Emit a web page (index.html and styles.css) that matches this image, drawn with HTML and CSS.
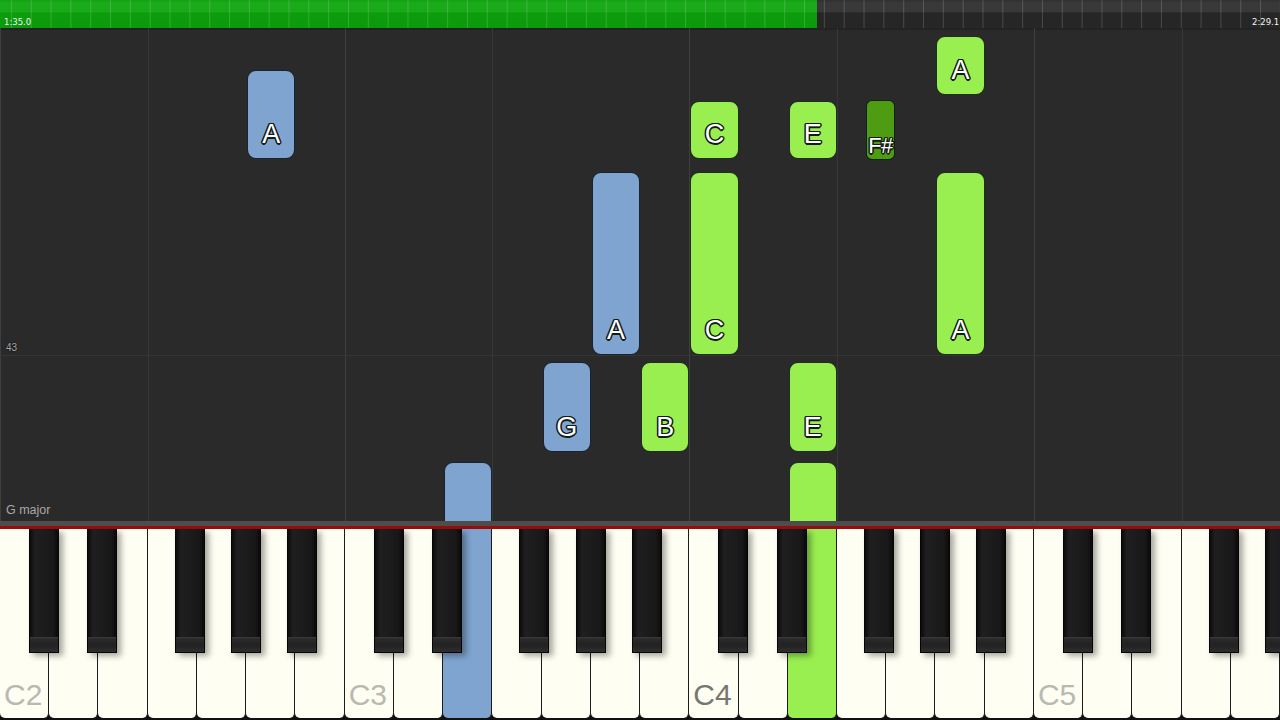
FILE: index.html
```html
<!DOCTYPE html>
<html>
<head>
<meta charset="utf-8">
<link rel="stylesheet" href="styles.css">
</head>
<body>
<div class="screen">
  <header class="timebar">
    <div class="progress"></div>
    <div class="remain"></div>
    <span class="time start">1:35.0</span>
    <span class="time end">2:29.1</span>
  </header>

  <main class="roll">
    <div class="lane c"></div>
    <div class="lane"></div>
    <div class="lane"></div>
    <div class="lane f"></div>
    <div class="lane"></div>
    <div class="lane"><div class="note blue" style="top:42px;height:89px"><span>A</span></div></div>
    <div class="lane"></div>
    <div class="lane c"></div>
    <div class="lane"></div>
    <div class="lane"><div class="note blue" style="top:434px;height:90px"></div></div>
    <div class="lane f"></div>
    <div class="lane"><div class="note blue" style="top:334px;height:90px"><span>G</span></div></div>
    <div class="lane"><div class="note blue" style="top:144px;height:183px"><span>A</span></div></div>
    <div class="lane"><div class="note green" style="top:334px;height:90px"><span>B</span></div></div>
    <div class="lane c">
      <div class="note green" style="top:73px;height:58px"><span>C</span></div>
      <div class="note green" style="top:144px;height:183px"><span>C</span></div>
    </div>
    <div class="lane"></div>
    <div class="lane">
      <div class="note green" style="top:73px;height:58px"><span>E</span></div>
      <div class="note green" style="top:334px;height:90px"><span>E</span></div>
      <div class="note green" style="top:434px;height:90px"></div>
    </div>
    <div class="lane f"><div class="note sharp" style="top:72px;height:60px"><span>F#</span></div></div>
    <div class="lane"></div>
    <div class="lane">
      <div class="note green" style="top:8px;height:59px"><span>A</span></div>
      <div class="note green" style="top:144px;height:183px"><span>A</span></div>
    </div>
    <div class="lane"></div>
    <div class="lane c"></div>
    <div class="lane"></div>
    <div class="lane"></div>
    <div class="lane f"></div>
    <div class="lane"></div>

    <div class="barline"></div>
    <span class="measure">43</span>
    <span class="key-sig">G major</span>
  </main>

  <div class="rail"></div>
  <div class="redline"></div>

  <section class="keys">
    <div class="white"><span class="octave">C2</span><i class="black cs"></i></div>
    <div class="white"><i class="black ds"></i></div>
    <div class="white"></div>
    <div class="white"><i class="black fs"></i></div>
    <div class="white"><i class="black gs"></i></div>
    <div class="white"><i class="black as"></i></div>
    <div class="white"></div>

    <div class="white"><span class="octave">C3</span><i class="black cs"></i></div>
    <div class="white"><i class="black ds"></i></div>
    <div class="white hit-blue"></div>
    <div class="white"><i class="black fs"></i></div>
    <div class="white"><i class="black gs"></i></div>
    <div class="white"><i class="black as"></i></div>
    <div class="white"></div>

    <div class="white"><span class="octave middle">C4</span><i class="black cs"></i></div>
    <div class="white"><i class="black ds"></i></div>
    <div class="white hit-green"></div>
    <div class="white"><i class="black fs"></i></div>
    <div class="white"><i class="black gs"></i></div>
    <div class="white"><i class="black as"></i></div>
    <div class="white"></div>

    <div class="white"><span class="octave">C5</span><i class="black cs"></i></div>
    <div class="white"><i class="black ds"></i></div>
    <div class="white"></div>
    <div class="white"><i class="black fs"></i></div>
    <div class="white"><i class="black gs"></i></div>
  </section>
</div>
</body>
</html>
```

FILE: styles.css
```css
html, body {
  margin: 0;
  padding: 0;
  background: #2a2a2a;
}

.screen {
  width: 1280px;
  height: 720px;
  overflow: hidden;
  display: flex;
  flex-direction: column;
  font-family: "Liberation Sans", Arial, sans-serif;
}

/* ---------- time bar ---------- */
.timebar {
  position: relative;
  height: 28px;
  flex: none;
  display: flex;
}

.progress {
  width: 817px;
  background: linear-gradient(#12a212 0, #1aab1a 12%, #19a919 42%, #0c9c0c 46%, #0b9a0b 100%);
}

.remain {
  flex: 1;
  background: linear-gradient(#303030 0, #393939 12%, #383838 42%, #262626 46%, #262626 100%);
}

.timebar::after {
  content: "";
  position: absolute;
  inset: 0;
  background-image: linear-gradient(90deg, transparent 11px, rgba(255, 255, 255, 0.16) 11px, rgba(255, 255, 255, 0.16) 12px, transparent 12px);
  background-size: 19.83px 100%;
  pointer-events: none;
}

.time {
  position: absolute;
  bottom: 2px;
  z-index: 1;
  font-family: "DejaVu Sans", sans-serif;
  font-size: 8.5px;
  color: #f4f4f4;
  line-height: 1;
}

.time.start { left: 4px; }
.time.end { left: 1252px; }

/* ---------- piano roll ---------- */
.roll {
  position: relative;
  height: 493px;
  flex: none;
  display: flex;
  overflow: hidden;
  background: #2a2a2a;
  box-shadow: inset 0 2px 0 #222;
}

.lane {
  position: relative;
  flex: 1;
}

.lane.c { box-shadow: inset 1px 0 0 #3e3e3e; }
.lane.f { box-shadow: inset 1px 0 0 #373737; }

.barline {
  position: absolute;
  left: 0;
  right: 0;
  top: 327px;
  height: 1px;
  background: #353535;
}

.measure {
  position: absolute;
  left: 6px;
  top: 314px;
  font-size: 10px;
  color: #a8a8a8;
  text-shadow: 0 0 2px #000;
}

.key-sig {
  position: absolute;
  left: 6px;
  top: 475px;
  font-family: "Liberation Sans", Arial, sans-serif;
  font-size: 12.5px;
  color: #a8a8a8;
}

.note {
  position: absolute;
  left: 1px;
  right: 0;
  box-sizing: border-box;
  border: 1px solid rgba(8, 14, 20, 0.85);
  border-radius: 9px;
  display: flex;
  flex-direction: column;
  justify-content: flex-end;
  align-items: center;
  padding-bottom: 10px;
}

.note.blue { background: #7fa4cf; }
.note.green { background: #9aef50; }

.note.sharp {
  left: 29px;
  right: auto;
  width: 29px;
  border-radius: 6px;
  background: #4d9c12;
  padding-bottom: 2px;
}

.note span {
  font-size: 27px;
  line-height: 1;
  color: #fff;
  text-shadow:
    -1px -1px 0 #141a14, 1px -1px 0 #141a14, -1px 1px 0 #141a14, 1px 1px 0 #141a14,
    0 -1.5px 0 #141a14, 0 1.5px 0 #141a14, -1.5px 0 0 #141a14, 1.5px 0 0 #141a14;
}

.note.sharp span {
  font-size: 22px;
  letter-spacing: -0.5px;
}

/* ---------- keyboard ---------- */
.rail {
  height: 5px;
  flex: none;
  background: #4d4d4d;
}

.redline {
  height: 3px;
  flex: none;
  background: #9a0c0c;
}

.keys {
  flex: 1;
  display: flex;
  background: #111;
  padding-bottom: 2px;
}

.white {
  position: relative;
  flex: 1;
  background: #fefef2;
  border-right: 1px solid #1c1c1c;
  border-radius: 0 0 5px 5px;
  display: flex;
  align-items: flex-end;
  padding: 0 0 8px 4px;
}

.white.hit-blue { background: #7fa4cf; }
.white.hit-green { background: #9aef50; }

.octave {
  font-size: 30px;
  line-height: 1;
  color: #b9b9b1;
}

.octave.middle { color: #777772; }

.black {
  position: absolute;
  top: 0;
  z-index: 2;
  width: 30px;
  height: 124px;
  box-sizing: border-box;
  border: 1px solid #050505;
  border-top: none;
  background:
    linear-gradient(to bottom, transparent 108px, #3c3c3c 108px, #2a2a2a 110px, #222 116px, #2e2e2e 123px),
    linear-gradient(to right, #0c0c0c, #1f1f1f 18%, #181818 82%, #0a0a0a);
  box-shadow: 4px 3px 6px rgba(0, 0, 0, 0.35);
}

.black.cs { left: 29px; }
.black.ds { left: 38px; }
.black.fs { left: 27px; }
.black.gs { left: 34px; }
.black.as { left: 41px; }
```
